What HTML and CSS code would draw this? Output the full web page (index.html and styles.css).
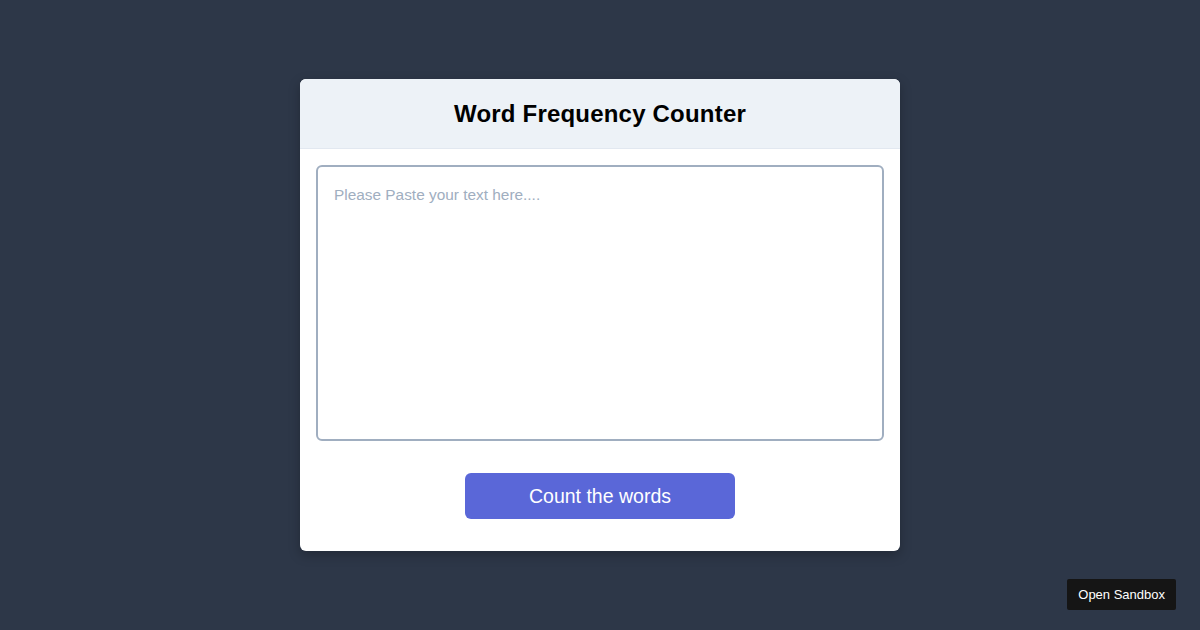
FILE: index.html
```html
<!DOCTYPE html>
<html lang="en">
<head>
<meta charset="UTF-8">
<meta name="viewport" content="width=device-width, initial-scale=1.0">
<title>Word Frequency Counter</title>
<link rel="stylesheet" href="styles.css">
</head>
<body>
<div class="card">
    <div class="card-header">
        <h1>Word Frequency Counter</h1>
    </div>
    <div class="card-body">
        <textarea id="text" placeholder="Please Paste your text here...."></textarea>
        <div class="actions">
            <button class="count-btn">Count the words</button>
        </div>
    </div>
</div>

<a class="sandbox-btn" href="#">Open Sandbox</a>
</body>
</html>
```

FILE: styles.css
```css
body {
    font-family: "Liberation Sans", Arial, sans-serif;
    margin: 0;
    padding: 0;
    display: flex;
    justify-content: center;
    align-items: center;
    min-height: 100vh;
    background-color: #2d3748;
}
.card {
    width: 600px;
    background-color: #fff;
    border-radius: 6px;
    overflow: hidden;
    box-shadow: 0 4px 12px rgba(0, 0, 0, 0.25);
}
.card-header {
    background-color: #edf2f7;
    border-bottom: 1px solid #e2e8f0;
    height: 69px;
    display: flex;
    align-items: center;
    justify-content: center;
}
.card-header h1 {
    margin: 0;
    font-size: 24px;
    font-weight: bold;
    letter-spacing: 0.2px;
    color: #000;
}
.card-body {
    padding: 16px 16px 32px;
}
textarea {
    display: block;
    box-sizing: border-box;
    width: 100%;
    height: 276px;
    padding: 19px 16px 16px;
    border: 2px solid #a0aec0;
    border-radius: 6px;
    font-family: "Liberation Sans", Arial, sans-serif;
    font-size: 15.4px;
    resize: none;
    outline: none;
}
textarea::placeholder {
    color: #a0aec0;
}
.actions {
    display: flex;
    justify-content: center;
    margin-top: 32px;
}
.count-btn {
    width: 270px;
    height: 46px;
    background-color: #5a67d8;
    color: #fff;
    border: none;
    border-radius: 6px;
    font-family: "Liberation Sans", Arial, sans-serif;
    font-size: 19.5px;
    cursor: pointer;
}
.sandbox-btn {
    position: fixed;
    right: 24px;
    bottom: 20px;
    background-color: #151515;
    color: #fff;
    font-size: 13px;
    text-decoration: none;
    padding: 0 11px;
    height: 31px;
    line-height: 31px;
    border-radius: 2px;
}
```
